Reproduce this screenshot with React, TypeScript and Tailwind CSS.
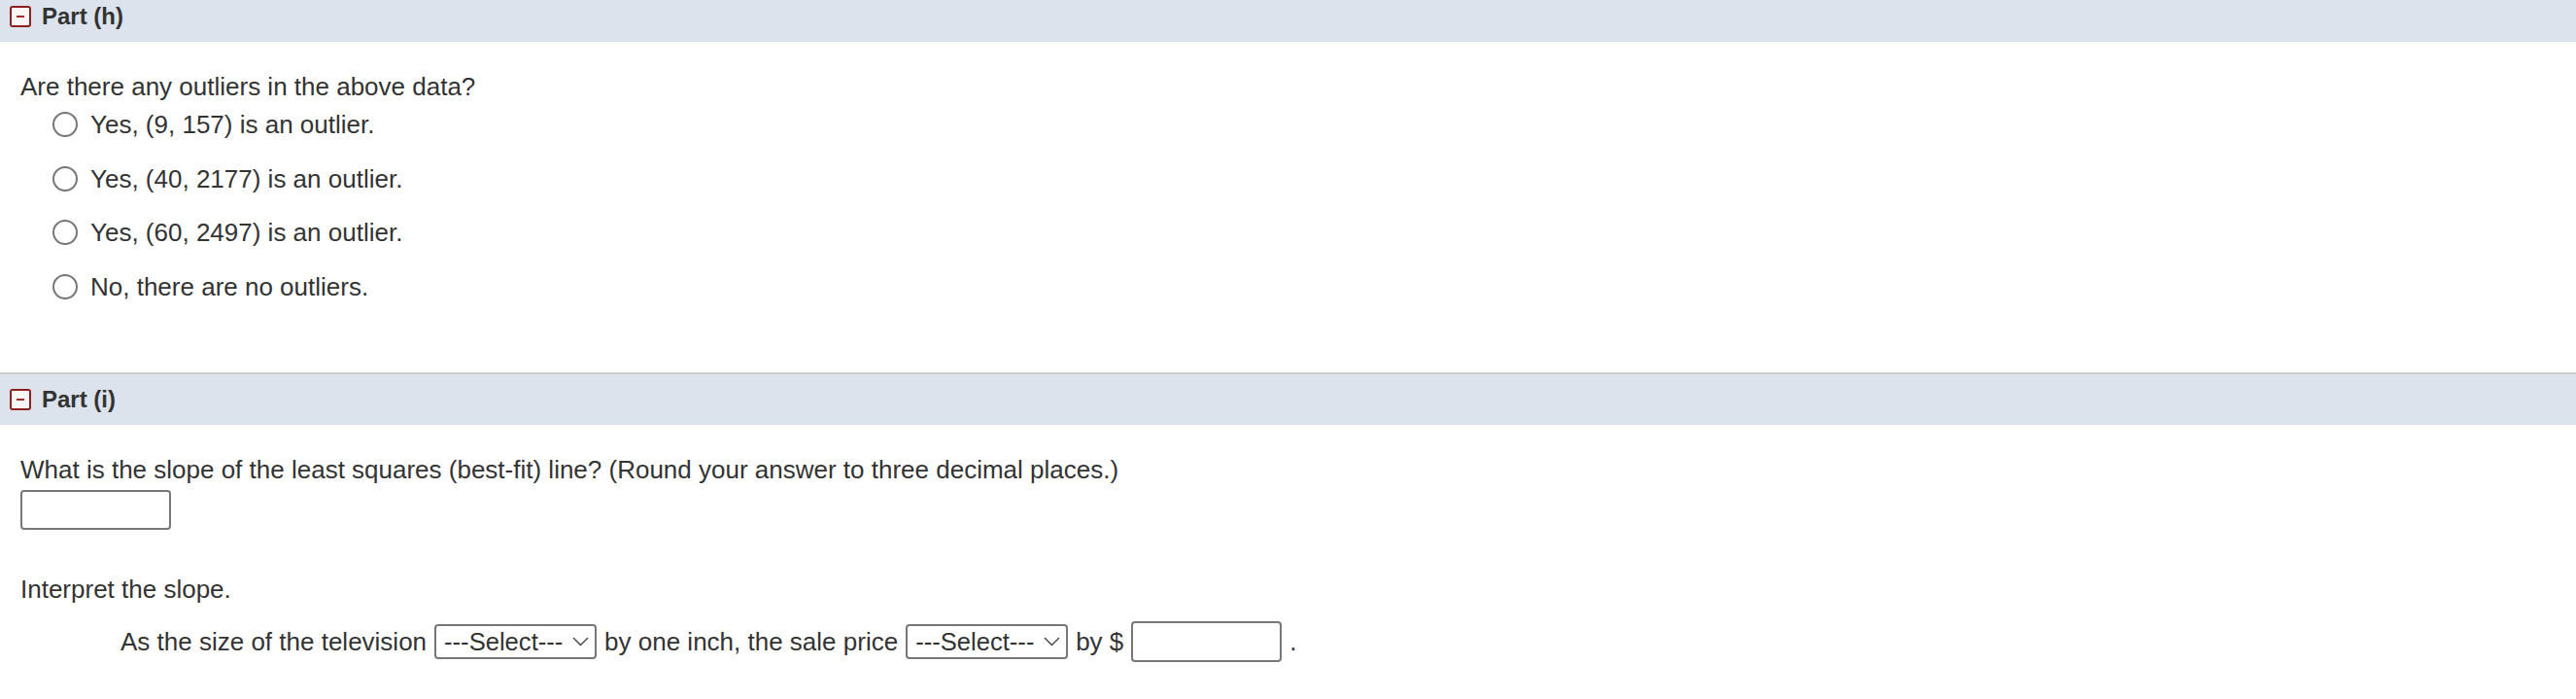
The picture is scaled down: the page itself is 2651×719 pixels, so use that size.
const font = { fontFamily: '"Liberation Sans", Arial, Helvetica, sans-serif' };

function MinusIcon() {
  return (
    <span className="flex h-[22px] w-[22px] shrink-0 items-center justify-center rounded-[3px] border-2 border-[#8e2020] bg-[#fbf6f6]">
      <span className="h-[2px] w-[8px] bg-[#a52a2a]" />
    </span>
  );
}

function PartHeader({ label }: { label: string }) {
  return (
    <div className="flex h-[52px] items-center gap-[11px] bg-[#dce3ec] pl-[10px]">
      <MinusIcon />
      <span className="text-[24px] font-bold leading-[30px] text-[#333]">{label}</span>
    </div>
  );
}

function Radio({ label }: { label: string }) {
  return (
    <label className="flex items-center gap-[13px]">
      <span className="h-[26px] w-[26px] shrink-0 rounded-full border-2 border-[#777] bg-white" />
      <span>{label}</span>
    </label>
  );
}

function FakeSelect() {
  return (
    <div className="relative h-[36px] w-[167px] shrink-0">
      <select className="h-full w-full appearance-none rounded-[4px] border-2 border-[#777] bg-white pl-[8px] text-[25.6px] leading-[30px] text-[#333] outline-none">
        <option>---Select---</option>
      </select>
      <svg
        className="pointer-events-none absolute right-[8px] top-[13px]"
        width="17"
        height="10"
        viewBox="0 0 17 10"
        fill="none"
        stroke="#444"
        strokeWidth="1.4"
      >
        <path d="M1 1l7.5 7.5L16 1" />
      </svg>
    </div>
  );
}

export default function App() {
  const options = [
    'Yes, (9, 157) is an outlier.',
    'Yes, (40, 2177) is an outlier.',
    'Yes, (60, 2497) is an outlier.',
    'No, there are no outliers.',
  ];

  return (
    <div style={font} className="min-h-screen overflow-hidden bg-white text-[26px] leading-[30px] text-[#333]">
      <section className="-mt-[9px]">
        <PartHeader label="Part (h)" />
        <div className="px-[21px] pb-[73px] pt-[31px]">
          <p>Are there any outliers in the above data?</p>
          <div className="mt-[9px] flex flex-col gap-[25.7px] pl-[33px]">
            {options.map((o) => (
              <Radio key={o} label={o} />
            ))}
          </div>
        </div>
      </section>

      <section className="border-t-2 border-[#cccccc]">
        <PartHeader label="Part (i)" />
        <div className="px-[21px] pt-[31px]">
          <p>What is the slope of the least squares (best-fit) line? (Round your answer to three decimal places.)</p>
          <input
            type="text"
            className="mt-[6px] block h-[41px] w-[155px] rounded-[4px] border-2 border-[#777] bg-white outline-none"
          />
          <p className="mt-[46px]">Interpret the slope.</p>
          <div className="mt-[18px] flex items-center gap-[8px] pl-[103px]">
            <span>As the size of the television</span>
            <FakeSelect />
            <span>by one inch, the sale price</span>
            <FakeSelect />
            <span>by $</span>
            <input
              type="text"
              className="h-[42px] w-[155px] rounded-[4px] border-2 border-[#777] bg-white outline-none"
            />
            <span>.</span>
          </div>
        </div>
      </section>
    </div>
  );
}
